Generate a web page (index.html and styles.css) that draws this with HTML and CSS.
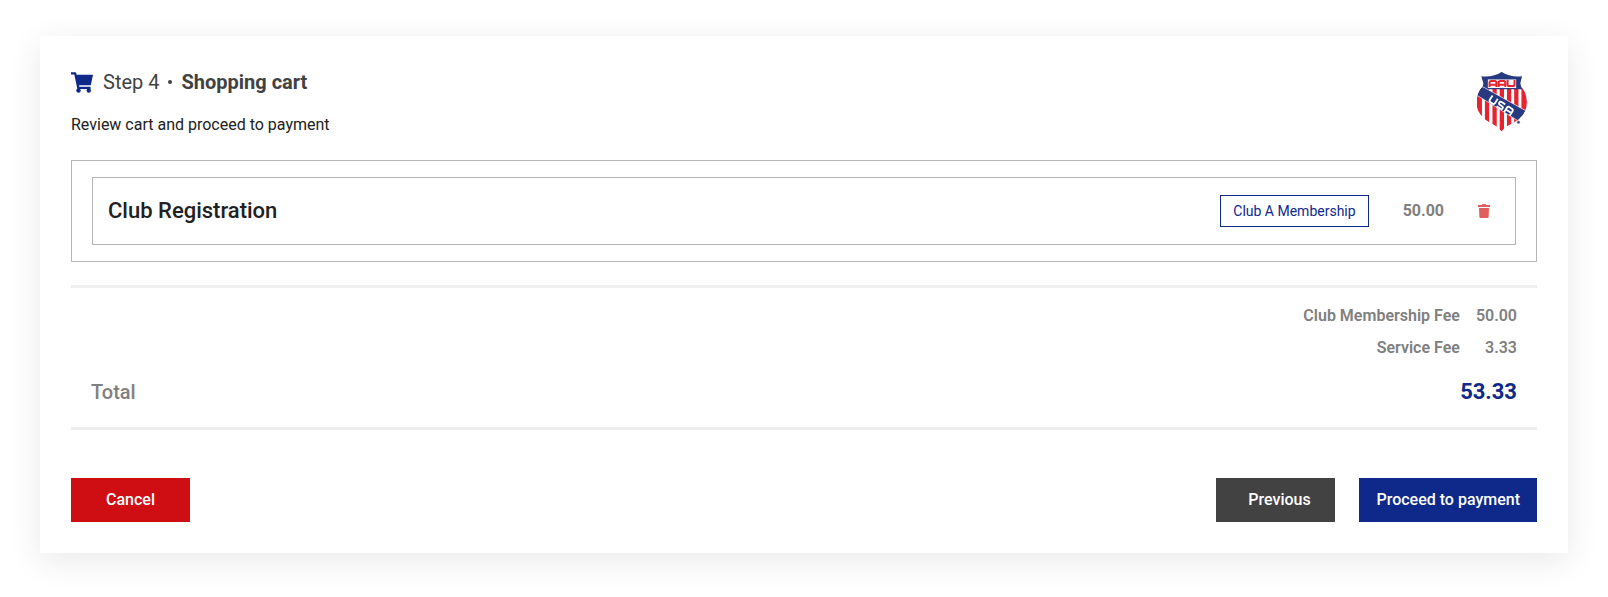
FILE: index.html
```html
<!DOCTYPE html>
<html lang="en">
<head>
<meta charset="utf-8">
<meta name="viewport" content="width=device-width, initial-scale=1">
<title>Shopping cart</title>
<link rel="stylesheet" href="styles.css">
</head>
<body>
<main class="card">
  <header class="head">
    <div class="head-text">
      <h1 class="step">
        <svg class="cart-icon" viewBox="0 0 22 21" aria-hidden="true">
          <path d="M0 .3h4.200q.8 0 1 .8l.4 1.700H22l-2.200 10.400H8l.3 1.500H19.500v2.300H6.400L3.300 2.500H0z" fill="#0e298a"/>
          <circle cx="7.500" cy="18.500" r="2.200" fill="#0e298a"/>
          <circle cx="17.800" cy="18.500" r="2.200" fill="#0e298a"/>
        </svg>
        <span>Step 4</span>
        <span class="dot" aria-hidden="true"></span>
        <strong class="step-name">Shopping cart</strong>
      </h1>
      <p class="intro">Review cart and proceed to payment</p>
    </div>
    <svg class="logo" viewBox="35 28 152 182" role="img" aria-label="AAU USA">
      <defs>
        <clipPath id="shield"><path d="M48 42Q84 46 110 29Q136 46 172 42L167 62Q166 74 177 84Q194 116 181 148Q169 174 137 188Q119 196 110 210Q101 196 84 188Q52 174 39 148Q26 116 44 84Q56 74 54 62Z"/></clipPath>
      </defs>
      <g clip-path="url(#shield)">
        <rect x="30" y="25" width="160" height="190" fill="#fff"/>
        <path d="M30 80h20v130H30zM59 80h13v130H59zM82 80h13v130H82zM104 80h13v130h-13zM126 80h13v130h-13zM148 80h13v130h-13zM170 80h20v130h-20z" fill="#e8222e"/>
        <path d="M40 25h140v57H40z" fill="#273a80"/>
        <rect x="68" y="52" width="86" height="26" fill="#fff"/>
        <path d="M34 70L56 76L192 152L170 184L30 97Z" fill="#273a80" stroke="#fff" stroke-width="2"/>
      </g>
      <g fill="none" stroke="#e8222e" stroke-width="6">
        <path d="M73 75V62q0-5 5-5h11q5 0 5 5v13M73 68h21M101 75V62q0-5 5-5h10q5 0 5 5v13M101 68h20M128 54v13q0 5 5 5h11q5 0 5-5V54"/>
      </g>
      <g fill="none" stroke="#fff" stroke-width="5.500" transform="rotate(33 108 129)">
        <path d="M71 119v15q0 6 6 6h7q6 0 6-6v-15M118 121h-13q-5 0-5 5t5 5h8q5 0 5 4.500t-5 4.500h-14M128 143v-16q0-6 6-6h8q6 0 6 6v16M128 133h20"/>
      </g>
      <circle cx="161" cy="182" r="4" fill="#273a80" stroke="#8791b6" stroke-width="2"/>
    </svg>
  </header>

  <section class="cart" aria-label="Cart items">
    <div class="item">
      <h2 class="item-name">Club Registration</h2>
      <span class="badge">Club A Membership</span>
      <span class="price">50.00</span>
      <button class="remove" type="button" aria-label="Remove Club Registration">
        <svg class="trash-icon" viewBox="0 0 12 14" aria-hidden="true">
          <path d="M.5 1H3.800L4.500 0h3l.7 1h3.300q.5 0 .5.500V3H0V1.500Q0 1 .5 1zM1 4h10l-.4 9q-.1 1-1.100 1H2.500q-1 0-1.100-1z" fill="#e25d5d"/>
        </svg>
      </button>
    </div>
  </section>

  <section class="summary" aria-label="Summary">
    <dl class="fees">
      <dt>Club Membership Fee</dt><dd>50.00</dd>
      <dt>Service Fee</dt><dd>3.33</dd>
    </dl>
    <div class="total">
      <span>Total</span>
      <strong class="total-value">53.33</strong>
    </div>
  </section>

  <footer class="actions">
    <button class="btn cancel" type="button">Cancel</button>
    <button class="btn previous" type="button">Previous</button>
    <button class="btn proceed" type="button">Proceed to payment</button>
  </footer>
</main>
</body>
</html>
```

FILE: styles.css
```css
* {
  box-sizing: border-box;
}

body {
  margin: 0;
  background: #fff;
  color: #212121;
  font: 16px/24px Roboto, "Liberation Sans", sans-serif;
}

h1, h2, p, dl, dd {
  margin: 0;
}

.card {
  margin: 36px 40px 44px;
  padding: 31px;
  background: #fff;
  box-shadow: 0 8px 32px rgba(0, 0, 0, 0.09);
}

.head {
  display: flex;
  justify-content: space-between;
  align-items: flex-start;
}

.step {
  display: flex;
  align-items: center;
  color: #424242;
  font-size: 20px;
  font-weight: 400;
  line-height: 30px;
}

.cart-icon {
  width: 22px;
  height: 21px;
  margin-right: 10px;
}

.dot {
  width: 4px;
  height: 4px;
  margin: 0 9px;
  border-radius: 50%;
  background: #424242;
}

.step-name {
  font-weight: 700;
}

.intro {
  margin-top: 16px;
}

.logo {
  width: 50px;
  height: 61px;
  margin: 4px 10px 0 0;
}

.cart {
  margin-top: 23px;
  padding: 16px 20px;
  border: 1px solid #b5b5b5;
}

.item {
  display: flex;
  align-items: center;
  min-height: 68px;
  padding: 0 25px 0 15px;
  border: 1px solid #b5b5b5;
}

.item-name {
  margin-right: auto;
  font-size: 22px;
  font-weight: 500;
}

.badge {
  padding: 3px 12px;
  border: 1px solid #0e298a;
  color: #0e298a;
  font-size: 14px;
}

.price {
  margin: 0 34px;
  color: #808080;
  font-weight: 700;
}

.remove {
  display: flex;
  padding: 0;
  border: 0;
  background: none;
  cursor: pointer;
}

.trash-icon {
  width: 12px;
  height: 14px;
}

.summary {
  margin-top: 23px;
  padding: 16px 20px 19px;
  border-top: 3px solid #eee;
  border-bottom: 3px solid #eee;
  color: #808080;
}

.fees {
  display: grid;
  grid-template-columns: auto auto;
  justify-content: end;
  gap: 8px 16px;
  text-align: right;
  font-weight: 600;
}

.total {
  display: flex;
  justify-content: space-between;
  align-items: last baseline;
  margin-top: 16px;
  font-size: 20px;
  font-weight: 500;
  line-height: 32px;
}

.total-value {
  color: #0e298a;
  font-size: 22px;
  font-weight: 700;
}

.actions {
  display: flex;
  gap: 24px;
  margin-top: 48px;
}

.btn {
  min-width: 119px;
  padding: 10px 17px;
  border: 0;
  color: #fff;
  font: inherit;
  font-weight: 500;
  cursor: pointer;
}

.cancel {
  margin-right: auto;
  background: #cf0e13;
}

.previous {
  padding-left: 24px;
  background: #424242;
}

.proceed {
  background: #0e298a;
}
```
